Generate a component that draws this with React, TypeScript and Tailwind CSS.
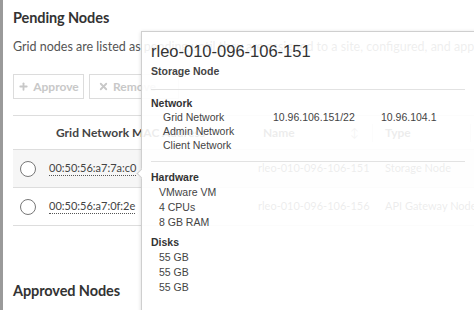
import { Plus, X } from "lucide-react"

const rows = [
  { mac: "00:50:56:a7:7a:c0", name: "rleo-010-096-106-151", type: "Storage Node" },
  { mac: "00:50:56:a7:0f:2e", name: "rleo-010-096-106-156", type: "API Gateway Node" },
]

function NodePopover() {
  return (
    <div className="absolute left-[141px] top-[31px] w-[345px] h-[300px] bg-white/90 border border-[#cfcfcf] shadow-[0_1px_4px_rgba(0,0,0,0.15)] px-[9px] pt-[8px] font-['Liberation_Sans',Arial,sans-serif] text-[#444]">
      {/* arrow toward the selected row */}
      <div className="absolute left-[-4px] top-[138px] w-[7px] h-[7px] rotate-45 bg-white border-l border-b border-[#cfcfcf]" />
      <div className="text-[16.5px] leading-[22px] text-[#333]">rleo-010-096-106-151</div>
      <div className="mt-[2px] text-[10.5px] leading-[15px] font-bold text-[#444]">Storage Node</div>
      <div className="mt-[10px] w-[314px] border-t border-[#e2e2e2]" />

      <div className="pt-[6px] text-[10.5px] leading-[14px]">
        <div className="font-bold text-[#333]">Network</div>
        <div className="pl-[12px] grid grid-cols-[110px_108px_1fr]">
          <span>Grid Network</span>
          <span>10.96.106.151/22</span>
          <span>10.96.104.1</span>
          <span>Admin Network</span>
          <span />
          <span />
          <span>Client Network</span>
          <span />
          <span />
        </div>
      </div>
      <div className="mt-[9px] w-[314px] border-t border-[#e2e2e2]" />

      <div className="pt-[8px] text-[10.5px] leading-[15px]">
        <div className="font-bold text-[#333]">Hardware</div>
        <div className="pl-[8px] flex flex-col">
          <span>VMware VM</span>
          <span>4 CPUs</span>
          <span>8 GB RAM</span>
        </div>
        <div className="mt-[5px] font-bold text-[#333]">Disks</div>
        <div className="pl-[8px] flex flex-col">
          <span>55 GB</span>
          <span>55 GB</span>
          <span>55 GB</span>
        </div>
      </div>
    </div>
  )
}

export default function App() {
  return (
    <div className="relative w-[474px] h-[310px] overflow-hidden bg-white flex font-['Lato',sans-serif]">
      <div className="w-[3px] shrink-0 bg-[#9a9a9a]" />
      <div className="flex-1 pl-[10px] pt-[7px]">
        <h2 className="text-[14.5px] leading-[22px] font-bold text-[#333] tracking-[-0.1px]">Pending Nodes</h2>
        <p className="mt-[8px] text-[12.5px] leading-[20px] text-[#555] whitespace-nowrap">
          Grid nodes are listed as pending until they are assigned to a site, configured, and approved.
        </p>

        <div className="mt-[17px] flex gap-[5px]">
          <button className="h-[25px] w-[71px] flex items-center justify-center gap-[4px] border border-[#dcdcdc] text-[12px] font-bold text-[#c8c8c8]">
            <Plus size={11} strokeWidth={4} />
            Approve
          </button>
          <button className="h-[25px] w-[90px] flex items-center pl-[8px] gap-[4px] border border-[#dcdcdc] text-[12px] font-bold text-[#c8c8c8]">
            <X size={11} strokeWidth={4} />
            Remove
          </button>
        </div>

        <div className="mt-[16px] w-[600px] border-t border-[#ddd]">
          <div className="h-[34px] flex items-center text-[12px] font-bold text-[#444] border-b border-[#ddd] whitespace-nowrap">
            <div className="w-[29px]" />
            <div className="w-[208px] pl-[14px]">Grid Network MAC Address</div>
            <div className="w-[100px] pl-[13px]">Name</div>
            <div className="w-[22px] text-[#999] font-normal">↕</div>
            <div className="w-[98px] pl-[12px] border-l border-[#ddd]">Type</div>
            <div className="border-l border-[#ddd] pl-[6px]">Status</div>
          </div>
          {rows.map((r, i) => (
            <div
              key={r.mac}
              className={`h-[38px] flex items-center text-[11px] text-[#444] border-b border-[#ddd] whitespace-nowrap ${i === 0 ? "bg-[#f6f6f6]" : "bg-white"}`}
            >
              <div className="w-[29px] flex justify-center">
                <span className="w-[16px] h-[16px] rounded-full border border-[#777] bg-white" />
              </div>
              <div className="w-[208px] pl-[7px]">
                <span className="border-b border-dotted border-[#555] pb-[1px]">{r.mac}</span>
              </div>
              <div className="w-[122px] pl-[8px]">{r.name}</div>
              <div className="w-[98px] pl-[13px]">{r.type}</div>
            </div>
          ))}
        </div>

        <h2 className="mt-[54px] text-[14.5px] leading-[22px] font-bold text-[#333] tracking-[-0.1px]">Approved Nodes</h2>
      </div>

      <NodePopover />
    </div>
  )
}
